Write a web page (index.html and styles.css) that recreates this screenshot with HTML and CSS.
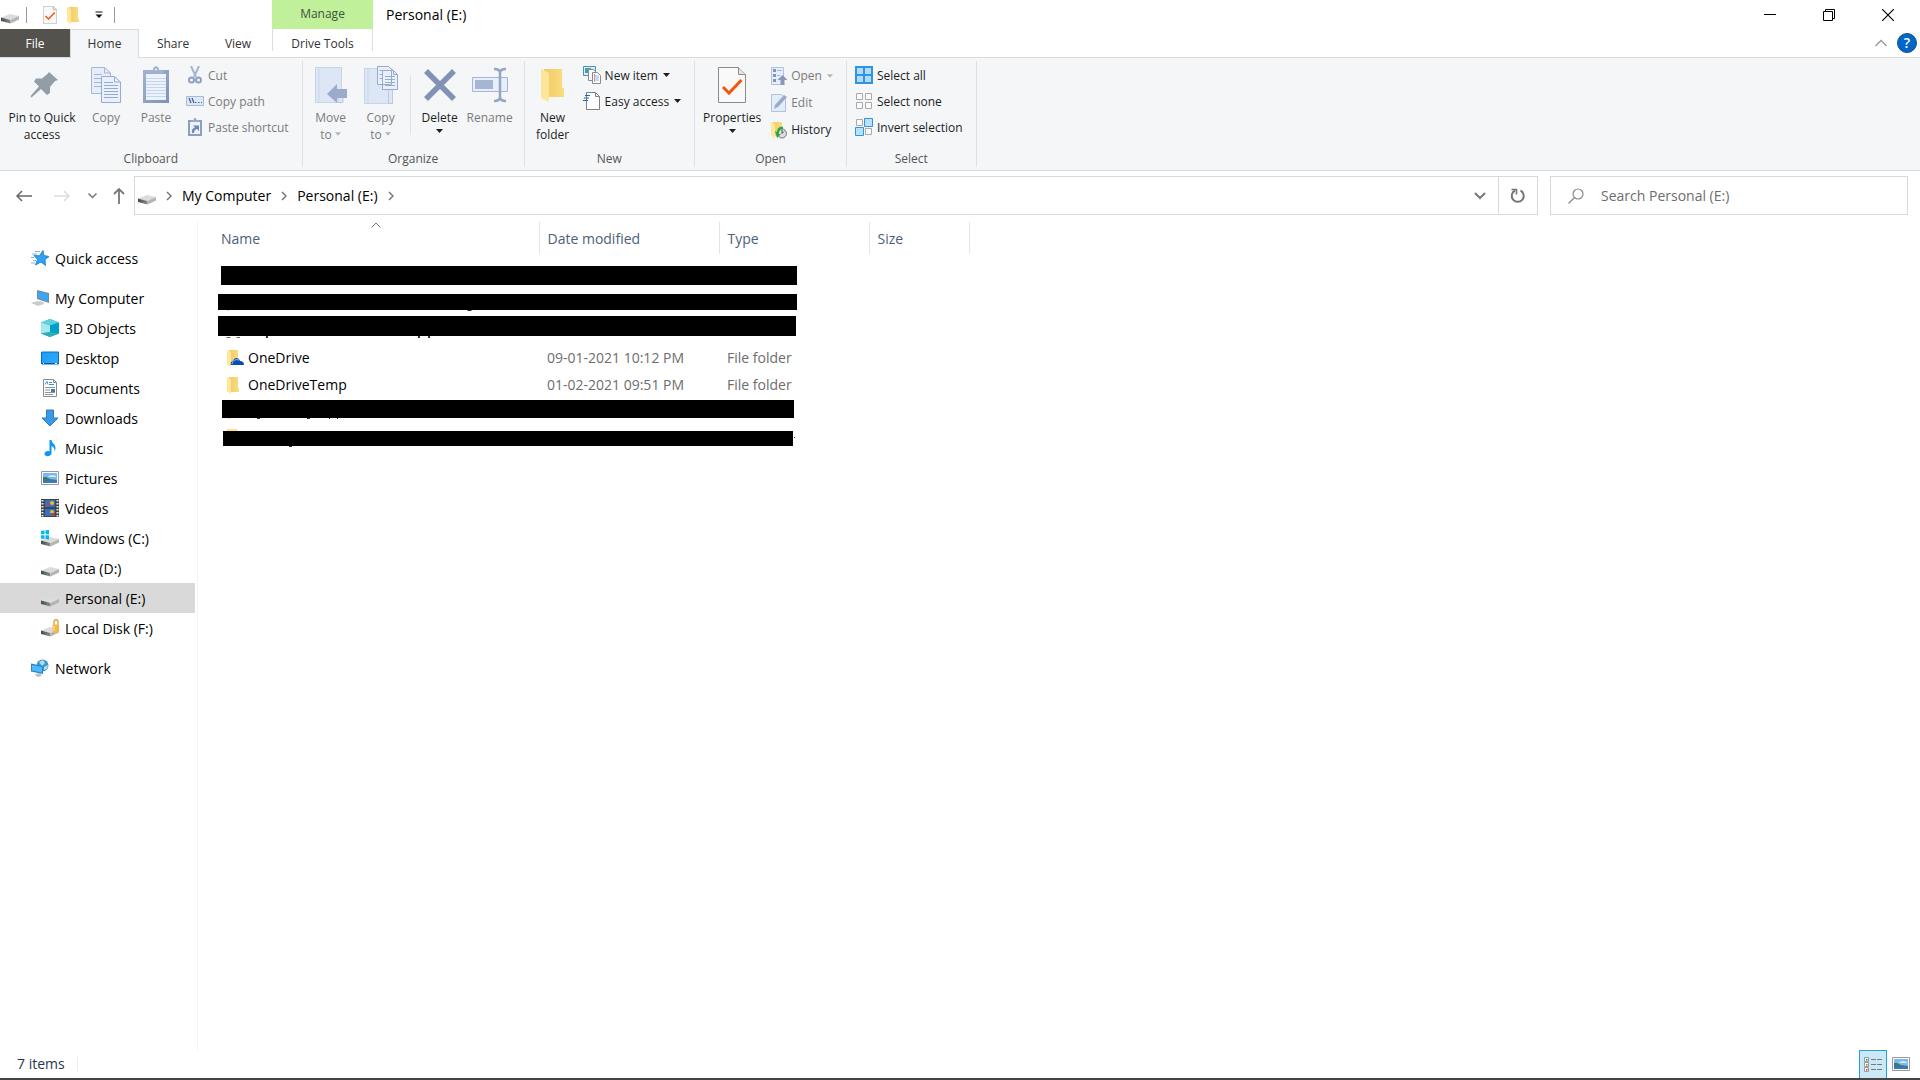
FILE: index.html
```html
<!DOCTYPE html>
<html lang="en">
<head>
  <meta charset="UTF-8">
  <meta name="viewport" content="width=device-width, initial-scale=1.0">
  <title>Personal (E:)</title>
  <link rel="stylesheet" href="styles.css">
</head>
<body>
  <!-- Shared icons -->
  <svg class="defs" width="0" height="0" aria-hidden="true">
    <linearGradient id="g-folder" x1="0" x2="1"><stop offset="0" stop-color="#efcb6b"/><stop offset="1" stop-color="#fbdc7c"/></linearGradient>
    <linearGradient id="g-clip" x1="0" x2="1" y2="1"><stop offset="0" stop-color="#a3b3d1"/><stop offset="1" stop-color="#7f91b5"/></linearGradient>
    <linearGradient id="g-blue" x1="0" x2="1" y2="1"><stop offset="0" stop-color="#1a9cf5"/><stop offset="1" stop-color="#31abff"/></linearGradient>
    <linearGradient id="g-side" x1="0" x2="1"><stop offset="0" stop-color="#4a4a4a"/><stop offset="1" stop-color="#8a8a8a"/></linearGradient>
    <symbol id="i-drive" viewBox="0 0 18 18">
      <path d="M0 11.500 9 8l9 2-8.500 4z" fill="#dcdcdc"/>
      <path d="M0 11.500 9.500 14v3.500L0 15z" fill="url(#g-side)"/>
      <path d="M9.500 14l8.500-4v3.500l-8.500 4z" fill="#b4b4b4"/>
      <path d="M5.500 14.300l1.500.4v1.300l-1.500-.4z" fill="#2fb457"/>
    </symbol>
    <symbol id="i-folder" viewBox="0 0 18 18">
      <path d="M3 1h9v11l1 1v3H3z" fill="url(#g-folder)"/>
      <path d="M1 1l4 2v15l-4-2.500z" fill="#ffe69b"/>
    </symbol>
    <symbol id="i-check" viewBox="0 0 28 36">
      <path d="M.5.500h20l7 7v28H.5z" fill="#f9f9f9" stroke="#8c8c8c"/>
      <path d="M20.500.500v7h7" fill="#e4e4e4" stroke="#8c8c8c"/>
      <path d="M5 20l6 6L23.500 13" fill="none" stroke="#f1580f" stroke-width="3"/>
    </symbol>
    <symbol id="i-pages" viewBox="0 0 30 36">
      <path d="M.5.500h13l6 5.500v20.500H.5z" fill="#e6eefa" stroke="#a5b5d3"/>
      <path d="M13.500.500v5.500h6M3 7.500h8M3 11.500h8M3 15.500h8M3 19.500h8" fill="none" stroke="#a5b5d3"/>
      <path d="M10.500 9.500h13l6 5.500v20.500h-19z" fill="#e9f0fb" stroke="#99abcd"/>
      <path d="M23.500 9.500v5.500h6M13 15.500h9M13 18.500h14M13 21.500h14M13 24.500h14M13 27.500h14M13 30.500h14" fill="none" stroke="#99abcd"/>
    </symbol>
    <symbol id="i-picture" viewBox="0 0 18 14">
      <path d="M.5.500h17v13H.5z" fill="#fff" stroke="#999"/>
      <path d="M2 2h14v10H2z" fill="#7ab8ef"/>
      <path d="M2 6h3l4 2 7 1v3H2z" fill="#3e7a78"/>
      <path d="M2 10l14-1v3H2z" fill="#3c78bf"/>
      <path d="M7 5l4-1 4 1v1H8z" fill="#d9eefc"/>
    </symbol>
    <symbol id="i-caret" viewBox="0 0 7 4"><path d="M0 0h7L3.500 4z" fill="currentColor"/></symbol>
    <symbol id="i-crumb" viewBox="0 0 6 10"><path d="M1 1l4 4-4 4" fill="none" stroke="#777" stroke-width="1.500"/></symbol>
  </svg>

  <div class="window">
    <!-- Title bar and tabs -->
    <header class="top">
      <div class="quick-bar">
        <svg class="icon" width="18" height="18"><use href="#i-drive"/></svg>
        <span class="bar-sep"></span>
        <button class="quick-button" aria-label="Properties"><svg width="14" height="18"><use href="#i-check"/></svg></button>
        <button class="quick-button" aria-label="New folder"><svg width="18" height="18"><use href="#i-folder"/></svg></button>
        <button class="quick-button quick-more" aria-label="Customize toolbar"><svg width="8" height="8" viewBox="0 0 8 8"><path d="M.5 1h7" stroke="#111"/><path d="M.5 3.500h7L4 7z" fill="#111"/></svg></button>
        <span class="bar-sep"></span>
      </div>
      <nav class="tabs">
        <a class="tab tab-file" href="#">File</a>
        <a class="tab tab-home" href="#">Home</a>
        <a class="tab tab-share" href="#">Share</a>
        <a class="tab tab-view" href="#">View</a>
      </nav>
      <div class="manage">
        <div class="manage-title">Manage</div>
        <a class="tab manage-tab" href="#">Drive Tools</a>
      </div>
      <div class="window-title">Personal (E:)</div>
      <div class="window-buttons">
        <button class="win-button" aria-label="Minimize"><svg width="12" height="12" viewBox="0 0 12 12"><path d="M0 5.500h12" stroke="#000"/></svg></button>
        <button class="win-button" aria-label="Restore"><svg width="12" height="12" viewBox="0 0 12 12"><path d="M.5 2.500h9v9h-9zM2.500 2.500v-2h9v9h-2" fill="none" stroke="#000"/></svg></button>
        <button class="win-button" aria-label="Close"><svg width="12" height="12" viewBox="0 0 12 12"><path d="M0 0l12 12M12 0L0 12" stroke="#000" stroke-width="1.200"/></svg></button>
      </div>
      <div class="help-buttons">
        <button class="plain" aria-label="Minimize the ribbon"><svg width="12" height="8" viewBox="0 0 12 8"><path d="M.5 7L6 1.500 11.500 7" fill="none" stroke="#999" stroke-width="1.300"/></svg></button>
        <button class="help" aria-label="Help">?</button>
      </div>
    </header>

    <!-- Ribbon -->
    <section class="ribbon">
      <div class="group">
        <div class="group-body">
          <button class="big big-wide">
            <svg width="36" height="36" viewBox="0 0 36 36"><path d="M25 5l9 8-3 1-5 6v6l-3 2-6-6-9 8-1.500.500.500-2 8-9-5-5 2-3h6l6-5z" fill="#929da5"/></svg>
            <span>Pin to Quick<br>access</span>
          </button>
          <button class="big" disabled>
            <svg width="30" height="36"><use href="#i-pages"/></svg>
            <span>Copy</span>
          </button>
          <button class="big" disabled>
            <svg width="28" height="38" viewBox="0 0 28 38"><path d="M1 4h26v33H1z" fill="url(#g-clip)"/><path d="M4 8h20v26H4z" fill="#edf3fc"/><path d="M4 12.500h20M4 15.500h20M4 18.500h20M4 21.500h20M4 24.500h20M4 27.500h20M4 30.500h20" stroke="#c6d5ee"/><path d="M6 4h5c0-5 6-5 6 0h5v3l-2 1H8L6 7z" fill="#a1b0ce"/><circle cx="14" cy="3.500" r="1" fill="#edf3fc"/></svg>
            <span>Paste</span>
          </button>
          <div class="small-list">
            <button class="small" disabled>
              <svg width="18" height="18" viewBox="0 0 18 18"><path d="M5 0l5 11M13 0L8 11" stroke="#a5b4d0" stroke-width="2"/><circle cx="5.500" cy="14" r="2.500" fill="none" stroke="#8fa1c2" stroke-width="2"/><circle cx="12.500" cy="14" r="2.500" fill="none" stroke="#8fa1c2" stroke-width="2"/></svg>
              Cut
            </button>
            <button class="small" disabled>
              <svg width="18" height="18" viewBox="0 0 18 18"><path d="M.5 4.500h17v9H.5z" fill="#dde8f7" stroke="#a9bad4"/><path d="M3 6l2 5M6 6l2 5" stroke="#4c6390" stroke-width="1.300"/><path d="M9 10.500h1.500M12 10.500h1.500M15 10.500h1" stroke="#4c6390"/></svg>
              Copy path
            </button>
            <button class="small" disabled>
              <svg width="18" height="18" viewBox="0 0 18 18"><path d="M2 2h14v16H2z" fill="#8c9dbf"/><path d="M4 4h10v12H4z" fill="#edf3fc"/><path d="M5 2h2.500c0-3 3-3 3 0H13v2H5z" fill="#9aabca"/><path d="M6 15c-.5-3 .5-5 3-5.500L7 7.500h6v5.500l-2-2c-2 .5-3 2-3 4z" fill="#7186b0"/></svg>
              Paste shortcut
            </button>
          </div>
        </div>
        <div class="group-name">Clipboard</div>
      </div>

      <div class="group">
        <div class="group-body body-tight">
          <button class="big" disabled>
            <svg width="32" height="36" viewBox="0 0 32 36"><path d="M.5.500h26v35H.5z" fill="#dce6f5" stroke="#c6d3e9"/><path d="M4 1v34" stroke="#cbd8ec"/><path d="M23 30c0-3 5-3 5 0v5.500h-5z" fill="#dce6f5" stroke="#bac9e2"/><path d="M12 27l10-10v5h10v9H22v5z" fill="#9cabc9"/></svg>
            <span>Move<br>to <svg class="caret" width="6" height="4"><use href="#i-caret"/></svg></span>
          </button>
          <button class="big" disabled>
            <svg width="34" height="38" viewBox="0 0 34 38"><path d="M.5 2.500h28v35H.5z" fill="#dce6f5" stroke="#c6d3e9"/><path d="M4 3v34" stroke="#cbd8ec"/><path d="M24.500 25c0-2 4-2 4 0v12.500h-4z" fill="#dce6f5" stroke="#bac9e2"/><path d="M13.500.500h11l3 3v15h-14zM18.500 4.500h11l4 4v15h-15z" fill="#e9f0fb" stroke="#99abcd"/><path d="M29.500 4.500v4h4M21 10.500h10M21 13.500h10M21 16.500h10M21 19.500h10M15.500 4.500h3M15.500 8.500h3M15.500 12.500h3" fill="none" stroke="#99abcd"/></svg>
            <span>Copy<br>to <svg class="caret" width="6" height="4"><use href="#i-caret"/></svg></span>
          </button>
          <span class="inner-sep"></span>
          <button class="big">
            <svg width="32" height="36" viewBox="0 0 32 36"><path d="M2 4l28 28M30 4L2 32" stroke="#8292b4" stroke-width="5.500"/></svg>
            <span>Delete<br><svg class="caret caret-under" width="7" height="4"><use href="#i-caret"/></svg></span>
          </button>
          <button class="big" disabled>
            <svg width="36" height="36" viewBox="0 0 36 36"><path d="M.5 10.500h35v14H.5z" fill="#e6effb" stroke="#a5b5d3"/><path d="M3 13h18v9H3z" fill="#a6b5d1"/><path d="M22 2c4 0 6 1 6 4v24c0 3-2 4-6 4M34 2c-4 0-6 1-6 4v24c0 3 2 4 6 4" fill="none" stroke="#94a5c6" stroke-width="2.500"/></svg>
            <span>Rename</span>
          </button>
        </div>
        <div class="group-name">Organize</div>
      </div>

      <div class="group">
        <div class="group-body">
          <button class="big">
            <svg width="26" height="36" viewBox="0 0 26 36"><path d="M4 2h18v18l2 2v8H4z" fill="url(#g-folder)"/><path d="M1 2l8 4v29l-8-4z" fill="#ffe59a"/></svg>
            <span>New<br>folder</span>
          </button>
          <div class="small-list">
            <button class="small">
              <svg width="18" height="18" viewBox="0 0 18 18"><path d="M.5.500h12v9H.5z" fill="#d6effb" stroke="#4a93b5"/><path d="M2 2h6v5H2z" fill="#4e9ea0"/><path d="M5.500 3.500h5l3 3v8h-8z" fill="#fbfbfb" stroke="#8a8a8a"/><path d="M9.500 6.500h5l3 3v8h-8z" fill="#fff" stroke="#8a8a8a"/><path d="M12 10h4M12 12h4M12 14h4" stroke="#8ab8e8"/><path d="M11.500 8v8" stroke="#ee9090"/></svg>
              New item <svg class="caret caret-side" width="7" height="4"><use href="#i-caret"/></svg>
            </button>
            <button class="small">
              <svg width="18" height="18" viewBox="0 0 18 18"><path d="M3.500 8V.5h9l4 4v13h-13V9" fill="#fff" stroke="#808080"/><path d="M12.500.500v4h4" fill="none" stroke="#808080"/><path d="M2 3.500h5M1 6h5M0 8.500h5" stroke="#1b6cb8" stroke-width="1.200"/></svg>
              Easy access <svg class="caret caret-side" width="7" height="4"><use href="#i-caret"/></svg>
            </button>
          </div>
        </div>
        <div class="group-name">New</div>
      </div>

      <div class="group">
        <div class="group-body">
          <button class="big big-props">
            <svg width="28" height="36"><use href="#i-check"/></svg>
            <span>Properties<br><svg class="caret caret-under" width="7" height="4"><use href="#i-caret"/></svg></span>
          </button>
          <div class="small-list list-loose">
            <button class="small" disabled>
              <svg width="16" height="18" viewBox="0 0 16 18"><path d="M.5.500h12v17H.5z" fill="#e6eefa" stroke="#b3c1da"/><path d="M2 2h3v3H2zM2 7h3v3H2zM2 12h3v3H2z" fill="#8093b8"/><path d="M6 3.500h5M6 8.500h3" stroke="#a5b5d3"/><path d="M11.500 8l5 5h-3v5h-4v-5h-3z" fill="#8798bb"/></svg>
              Open <svg class="caret caret-side" width="6" height="4"><use href="#i-caret"/></svg>
            </button>
            <button class="small" disabled>
              <svg width="16" height="18" viewBox="0 0 16 18"><path d="M.5.500h10l4 4v13H.5z" fill="#e3edf9" stroke="#b3c1da"/><path d="M3 15l1-4L13 1l3 2-9 10z" fill="#9aabca"/></svg>
              Edit
            </button>
            <button class="small">
              <svg width="16" height="18" viewBox="0 0 16 18"><path d="M2 1h9v14H2z" fill="url(#g-folder)"/><path d="M0 1l4 2v14l-4-2z" fill="#ffe69b"/><circle cx="11" cy="12.500" r="4.500" fill="#ddd" stroke="#777"/><path d="M11 12.500l2-2M11 9v3.500" stroke="#555"/><path d="M12 6c-4-1-6 2-6 5l-2-1 2 7 4-4H8c0-3 1-5 4-5z" fill="#28a745"/></svg>
              History
            </button>
          </div>
        </div>
        <div class="group-name">Open</div>
      </div>

      <div class="group">
        <div class="group-body">
          <div class="small-list">
            <button class="small">
              <svg width="18" height="18" viewBox="0 0 18 18"><path d="M1 1h16v16H1z" fill="#aedcfa" stroke="#3393df" stroke-width="2"/><path d="M9 1v16M1 9h16" stroke="#3393df" stroke-width="2"/></svg>
              Select all
            </button>
            <button class="small">
              <svg width="18" height="18" viewBox="0 0 18 18"><path d="M1.500 1.500h6v6h-6zM10.500 1.500h6v6h-6zM1.500 10.500h6v6h-6zM10.500 10.500h6v6h-6z" fill="#fafafa" stroke="#aaa"/></svg>
              Select none
            </button>
            <button class="small">
              <svg width="18" height="18" viewBox="0 0 18 18"><path d="M1.500 1.500h6v6h-6zM10.500 10.500h6v6h-6z" fill="#fafafa" stroke="#aaa"/><path d="M9.500.500h8v8h-8zM.5 9.500h8v8h-8z" fill="#b9e1fb" stroke="#3393df"/></svg>
              Invert selection
            </button>
          </div>
        </div>
        <div class="group-name">Select</div>
      </div>
    </section>

    <!-- Address row -->
    <div class="address-row">
      <div class="history-buttons">
        <button class="plain" aria-label="Back"><svg width="16" height="12" viewBox="0 0 16 12"><path d="M6 1L1 6l5 5M1 6h15" fill="none" stroke="#666" stroke-width="1.500"/></svg></button>
        <button class="plain" aria-label="Forward"><svg width="16" height="12" viewBox="0 0 16 12"><path d="M10 1l5 5-5 5M0 6h15" fill="none" stroke="#ddd" stroke-width="1.500"/></svg></button>
        <button class="plain recent" aria-label="Recent locations"><svg width="9" height="6" viewBox="0 0 9 6"><path d="M.5.500l4 4 4-4" fill="none" stroke="#777" stroke-width="1.500"/></svg></button>
        <button class="plain" aria-label="Up"><svg width="12" height="16" viewBox="0 0 12 16"><path d="M1 6l5-5 5 5M6 1v15" fill="none" stroke="#777" stroke-width="1.800"/></svg></button>
      </div>
      <div class="address">
        <svg class="icon" width="18" height="18"><use href="#i-drive"/></svg>
        <svg width="6" height="10"><use href="#i-crumb"/></svg>
        <a href="#">My Computer</a>
        <svg width="6" height="10"><use href="#i-crumb"/></svg>
        <a href="#">Personal (E:)</a>
        <svg width="6" height="10"><use href="#i-crumb"/></svg>
        <button class="plain address-drop" aria-label="Previous locations"><svg width="12" height="8" viewBox="0 0 12 8"><path d="M1 1l5 5 5-5" fill="none" stroke="#777" stroke-width="2"/></svg></button>
        <button class="plain refresh" aria-label="Refresh"><svg width="16" height="16" viewBox="0 0 16 16"><path d="M10.500 2.500A6 6 0 1 1 5 2.500" fill="none" stroke="#777" stroke-width="2"/><path d="M1.500 1.500h5v5" fill="none" stroke="#777" stroke-width="1.600"/></svg></button>
      </div>
      <label class="search">
        <svg width="16" height="16" viewBox="0 0 16 16"><circle cx="10" cy="6" r="5" fill="none" stroke="#888" stroke-width="1.200"/><path d="M6.500 9.500L.5 15.500" stroke="#888" stroke-width="1.200"/></svg>
        <input type="text" placeholder="Search Personal (E:)" aria-label="Search Personal (E:)">
      </label>
    </div>

    <div class="content">
      <!-- Navigation pane -->
      <nav class="sidebar">
        <a class="place place-top" href="#"><svg width="18" height="18" viewBox="0 0 18 18"><path d="M12 1.500l.8 5L18 7.500l-4 3 .5 6-4.500-3.500-5.500 3 2-5.500L3 6.500l5.500.3z" fill="#2ea3f2" stroke="#1576c5" stroke-width=".8"/><path d="M4 2.500h5M1 5h5M0 8.500h3M2 11.500h3M0 14h4" stroke="#75b9ef"/></svg>Quick access</a>
        <a class="place place-top place-gap" href="#"><svg width="18" height="18" viewBox="0 0 18 18"><path d="M6 1l12 3v10L6 10z" fill="#7c8994"/><path d="M7 2.500L17 5v7.500L7 9z" fill="#36a8f5"/><path d="M9 12l5 2-3 1-4-2zM0 14l6-2 7 3-6 2z" fill="#c8ccd0"/></svg>My Computer</a>
        <a class="place" href="#"><svg width="18" height="18" viewBox="0 0 18 18"><path d="M0 3.500L9 0l9 3.500v11L9 18l-9-3.500z" fill="#16a4b8"/><path d="M0 3.500L9 0l9 3.500L9 6.500z" fill="#5ed2dc"/><path d="M0 3.500L9 6.500V13l-9 1.500z" fill="#a4e9ed"/><path d="M18 3.500L9 6.500V13l9 1.500z" fill="#00a0c9"/><path d="M0 14.500L9 13l9 1.500L9 18z" fill="#2cb0b5"/></svg>3D Objects</a>
        <a class="place" href="#"><svg width="18" height="18" viewBox="0 0 18 18"><path d="M.5 3h17v12H.5z" fill="url(#g-blue)" stroke="#0870bd"/><path d="M1 14.500h16" stroke="#075a99"/><path d="M2 14.500h1M14 14.500h2" stroke="#fff"/></svg>Desktop</a>
        <a class="place" href="#"><svg width="18" height="18" viewBox="0 0 18 18"><path d="M2.500.500h10l3 3v14h-13z" fill="#fff" stroke="#8a8a8a"/><path d="M12.500.500v3h3" fill="none" stroke="#8a8a8a"/><path d="M4 5.500l2-3 1 3M8 3.500h3M8 5.500h5" fill="none" stroke="#3d92d6"/><path d="M4 8.500h10M4 11h5M4 13.500h10M4 15.500h8" stroke="#8d9398"/><path d="M10 10h4v3h-4z" fill="#3d7ea8"/></svg>Documents</a>
        <a class="place" href="#"><svg width="18" height="18" viewBox="0 0 18 18"><path d="M5.500 1h7v8h4.500L9 17 1 9h4.500z" fill="#3999e8" stroke="#2c7cc4"/></svg>Downloads</a>
        <a class="place" href="#"><svg width="18" height="18" viewBox="0 0 18 18"><path d="M8.500 1h2c0 3 4 4 4 8 0 1-.5 3-1 3.500.5-3-1-4.500-3-5.500v7c0 4-7 4-7 1 0-2.500 3-3.500 5-2.500z" fill="#0a98f0"/></svg>Music</a>
        <a class="place" href="#"><svg width="18" height="14"><use href="#i-picture"/></svg>Pictures</a>
        <a class="place" href="#"><svg width="18" height="18" viewBox="0 0 18 18"><path d="M0 0h18v18H0z" fill="#444"/><path d="M1.500 1v17M16.500 1v17" stroke="#e8e8e8" stroke-width="2" stroke-dasharray="1.500 1.500"/><path d="M4 1h10v7H4zM4 10h10v7H4z" fill="#2f72cb"/><circle cx="11" cy="4" r="2" fill="#e6bf2b"/><circle cx="7" cy="5" r="1.500" fill="#d33"/><circle cx="11" cy="13" r="2" fill="#e6bf2b"/><path d="M10 14h4v2h-4z" fill="#c33"/></svg>Videos</a>
        <a class="place" href="#"><svg width="18" height="18" viewBox="0 0 18 18"><use href="#i-drive"/><path d="M0 2l3.500-.5v3.800H0zM4.500 1.300L8 1v4.300H4.500zM0 6.200h3.500V10L0 9.500zM4.500 6.200H8v4.300L4.500 10z" fill="#00b7f0"/></svg>Windows (C:)</a>
        <a class="place" href="#"><svg width="18" height="18"><use href="#i-drive"/></svg>Data (D:)</a>
        <a class="place place-active" href="#"><svg width="18" height="18"><use href="#i-drive"/></svg>Personal (E:)</a>
        <a class="place" href="#"><svg width="18" height="18" viewBox="0 0 18 18"><use href="#i-drive"/><path d="M13 6V3c0-3 4-3 4 0v3" fill="none" stroke="#dda23a" stroke-width="1.300"/><path d="M11.500 5.500h6.500v7l-3.500 2-3-2z" fill="#f1b94c"/><path d="M13 7v5" stroke="#ffe0a0"/></svg>Local Disk (F:)</a>
        <a class="place place-top place-gap" href="#"><svg width="18" height="18" viewBox="0 0 18 18"><circle cx="11.500" cy="6.500" r="6" fill="#3f97c9"/><path d="M8 3l4-2 2 3-3 3zM13 8l4-2-1 4-3 1z" fill="#b8dcea"/><path d="M0 4.500L12 7v8L0 12.500z" fill="#2584c4"/><path d="M1 6l10 2v5.500L1 11.500z" fill="#4db9fb"/><path d="M4 15l5-1 2 3-5 1z" fill="#b9bfc4"/></svg>Network</a>
      </nav>

      <!-- File list -->
      <main class="files">
        <table class="file-table">
          <thead>
            <tr>
              <th class="col-name">Name<svg class="sort" width="10" height="6" viewBox="0 0 10 6"><path d="M.5 5.500L5 1l4.500 4.500" fill="none" stroke="#777"/></svg></th>
              <th class="col-date">Date modified</th>
              <th class="col-type">Type</th>
              <th class="col-size">Size</th>
              <th></th>
            </tr>
          </thead>
          <tbody>
            <tr class="spacer"><td colspan="5"></td></tr>
            <tr><td colspan="5"></td></tr>
            <tr><td colspan="5"></td></tr>
            <tr><td colspan="5"></td></tr>
            <tr>
              <td><a href="#"><svg width="18" height="18" viewBox="0 0 18 18"><use href="#i-folder"/><path d="M5 16c-1-3 1-4 2-4 1-4 6-4 7 0 3 0 4 2 4 4z" fill="#0c4db2"/><path d="M6 15c1-4 4-5 7-4" fill="none" stroke="#bcd6fa" stroke-width=".8"/></svg>OneDrive</a></td>
              <td>09-01-2021 10:12 PM</td>
              <td>File folder</td>
              <td></td>
              <td></td>
            </tr>
            <tr>
              <td><a href="#"><svg width="18" height="18"><use href="#i-folder"/></svg>OneDriveTemp</a></td>
              <td>01-02-2021 09:51 PM</td>
              <td>File folder</td>
              <td></td>
              <td></td>
            </tr>
            <tr><td colspan="5"></td></tr>
            <tr><td colspan="5"></td></tr>
          </tbody>
        </table>
        <!-- Bars over the hidden rows -->
        <svg class="masks" width="600" height="190" viewBox="0 0 600 190" aria-hidden="true">
          <path d="M9 44h2v1H9zM10 152h2v1h-2zM9 163h10v2H9z" fill="#ffdf8b"/>
          <path d="M8 71h5l-1 1H9zM18 71h4v1h-3z" fill="#786858"/>
          <path d="M249 44h5l-1 1h-3zM48 70h2v2h-2zM200 70h2v2h-2zM210 70h2v2h-2zM39 152h3v1h-3zM89 152h3v1h-3zM111 152h1v1h-1zM119 152h1v1h-1zM71 180h3v1h-3zM576 171h1v1h-1z" fill="#333"/>
          <path d="M3 0h576v19H3zM0 28h579v16H0zM0 50h578v20H0zM4 134h572v18H4zM5 165h570v15H5z"/>
        </svg>
      </main>
    </div>

    <!-- Status bar -->
    <footer class="status">
      <span class="count">7 items</span>
      <button class="view-button view-active" aria-label="Details view"><svg width="18" height="16" viewBox="0 0 18 16"><path d="M.5.500h4v4h-4zM.5 5.500h4v4h-4zM.5 10.500h4v4h-4z" fill="#fff" stroke="#999"/><path d="M2 2h1.500v1.500H2z" fill="#2476b5"/><path d="M2 7h1.500v1.500H2z" fill="#7d8d18"/><path d="M2 12h1.500v1.500H2z" fill="#d42c20"/><path d="M7 2.500h5M13 2.500h5M7 7.500h5M13 7.500h5M7 12.500h5M13 12.500h5" stroke="#777"/></svg></button>
      <button class="view-button" aria-label="Large icons view"><svg width="18" height="14"><use href="#i-picture"/></svg></button>
    </footer>
  </div>
</body>
</html>
```
FILE: styles.css
```css
* {
  box-sizing: border-box;
}

body {
  margin: 0;
  font-family: "Open Sans", "Noto Sans", sans-serif;
  font-size: 14px;
  color: #000;
  background-color: #fff;
}

a {
  color: inherit;
  text-decoration: none;
}

svg {
  flex: none;
  display: block;
}

button, input {
  font: inherit;
  color: inherit;
  background: none;
  border: none;
  padding: 0;
  margin: 0;
}

.defs {
  position: absolute;
}

.window {
  display: flex;
  flex-direction: column;
  min-height: 100vh;
  border-bottom: 2px solid #444;
}

/* title bar and tabs */
.top {
  display: grid;
  grid-template-columns: 272px 101px 1fr auto;
  grid-template-rows: 29px 28px;
}

.quick-bar {
  display: flex;
  align-items: center;
  gap: 7px;
  padding-left: 1px;
}

.bar-sep {
  width: 1px;
  height: 16px;
  margin-right: 7px;
  background-color: #999;
}

.quick-button {
  display: flex;
  justify-content: center;
  width: 18px;
}

.quick-more {
  width: 16px;
}

.tabs {
  grid-row: 2;
  grid-column: 1;
  display: flex;
}

.tab {
  display: flex;
  align-items: center;
  justify-content: center;
  font-size: 12px;
  color: #333;
}

.tab-file {
  width: 70px;
  background-color: #54524d;
  color: #fff;
}

.tab-home {
  position: relative;
  width: 69px;
  background-color: #f4f6f8;
  border: 1px solid #d9dbdc;
  border-bottom: none;
  margin-bottom: -1px;
  padding-bottom: 2px;
}

.tab-share {
  width: 68px;
}

.tab-view {
  width: 62px;
}

.manage {
  grid-row: 1 / 3;
  grid-column: 2;
  display: grid;
  grid-template-rows: 29px 28px;
}

.manage-title {
  display: flex;
  align-items: center;
  justify-content: center;
  background-color: #c1f09b;
  font-size: 12px;
  color: #40523a;
  padding-bottom: 2px;
}

.manage-tab {
  border: solid #ddd;
  border-width: 0 1px;
  margin-bottom: 6px;
  padding-top: 6px;
}

.window-title {
  grid-column: 3;
  padding-left: 13px;
  line-height: 29px;
}

.window-buttons {
  grid-column: 4;
  display: flex;
  align-items: center;
  gap: 47px;
  padding-right: 26px;
}

.win-button {
  display: flex;
}

.help-buttons {
  grid-row: 2;
  grid-column: 4;
  display: flex;
  align-items: center;
  justify-content: flex-end;
  gap: 10px;
  padding-right: 3px;
}

.help {
  width: 20px;
  height: 20px;
  border: 1px solid #174e82;
  border-radius: 10px;
  background-color: #0067c9;
  color: #fff;
  line-height: 18px;
  font-weight: 600;
}

.plain {
  display: flex;
  align-items: center;
  justify-content: center;
}

/* ribbon */
.ribbon {
  display: flex;
  padding: 3px 0;
  background-color: #f4f6f8;
  border: solid #d9dbdc;
  border-width: 1px 0;
  font-size: 12px;
  color: #1e1e1e;
}

.group {
  display: flex;
  flex-direction: column;
  border-right: 1px solid #dfe1e3;
}

.group-body {
  display: flex;
  flex: 1;
  padding: 0 13px 8px 3px;
}

.body-tight {
  padding-right: 9px;
}

.group-name {
  text-align: center;
  line-height: 16px;
  color: #555;
}

.big {
  display: flex;
  flex-direction: column;
  align-items: center;
  gap: 5px;
  width: 50px;
  padding-top: 5px;
  line-height: 17px;
}

.big > svg {
  height: 38px;
}

.big-wide {
  width: 78px;
}

.big-props {
  width: 68px;
}

.caret {
  display: inline-block;
  vertical-align: 3px;
}

.caret-under {
  vertical-align: 6px;
}

.caret-side {
  margin-left: 1px;
}

.inner-sep {
  width: 1px;
  margin: 14px 4px 8px;
  background-color: #dfe1e3;
}

button:disabled {
  color: #7b7b7b;
}

button:disabled .caret {
  color: #b5b5b5;
}

.small-list {
  display: flex;
  flex-direction: column;
  padding: 1px 0 0 5px;
}

.small {
  display: flex;
  align-items: center;
  gap: 4px;
  height: 26px;
}

.list-loose .small {
  height: 27px;
}

/* address row */
.address-row {
  display: flex;
  gap: 12px;
  padding: 5px 12px 7px 16px;
}

.history-buttons {
  display: flex;
  align-items: center;
  gap: 22px;
}

.recent {
  margin: 0 -6px 0 -4px;
}

.address {
  display: flex;
  flex: 1;
  align-items: center;
  gap: 10px;
  height: 39px;
  margin-left: -3px;
  padding-left: 3px;
  border: 1px solid #d9d9d9;
}

.address-drop {
  margin-left: auto;
  padding-right: 2px;
}

.refresh {
  width: 39px;
  height: 37px;
  border-left: 1px solid #d9d9d9;
}

.search {
  display: flex;
  align-items: center;
  gap: 17px;
  width: 358px;
  padding: 0 17px;
  border: 1px solid #d9d9d9;
}

.search input {
  flex: 1;
  min-width: 0;
  outline: none;
}

.search input::placeholder {
  color: #6d6d6d;
  opacity: 1;
}

/* navigation pane */
.content {
  display: flex;
  flex: 1;
}

.sidebar {
  width: 198px;
  padding: 21px 2px 0 0;
  border-right: 1px solid #f3f3f3;
}

.place {
  display: flex;
  align-items: center;
  gap: 6px;
  height: 30px;
  padding-left: 41px;
}

.place-top {
  padding-left: 31px;
}

.place-gap {
  margin-top: 10px;
}

.place-active {
  background-color: #d9d9d9;
}

/* file list */
.files {
  position: relative;
  flex: 1;
  padding-left: 15px;
}

.file-table {
  width: 100%;
  table-layout: fixed;
  border-collapse: collapse;
}

.file-table th {
  position: relative;
  height: 32px;
  padding: 0 0 0 8px;
  border-right: 1px solid #e5e5e5;
  font-weight: normal;
  text-align: left;
  color: #4c607a;
}

.file-table th:last-child {
  border-right: none;
}

.col-name {
  width: 326px;
}

.col-date {
  width: 180px;
}

.col-type {
  width: 150px;
}

.col-size {
  width: 100px;
}

.sort {
  position: absolute;
  top: 0;
  left: 158px;
}

.file-table td {
  height: 27px;
  padding: 0 0 0 8px;
  color: #6d6d6d;
}

.file-table .spacer td {
  height: 9px;
}

.file-table td a {
  display: flex;
  align-items: center;
  gap: 4px;
  padding-left: 5px;
  color: #000;
}

.masks {
  position: absolute;
  top: 44px;
  left: 20px;
}

/* status bar */
.status {
  display: flex;
  align-items: center;
  height: 28px;
  padding: 0 5px 0 17px;
  color: #26364f;
}

.count {
  margin-right: auto;
  padding-right: 12px;
  border-right: 1px solid #eee;
  line-height: 14px;
}

.view-button {
  display: flex;
  align-items: center;
  justify-content: center;
  width: 28px;
  height: 28px;
}

.view-active {
  background-color: #cbe8f6;
  border: 1px solid #26a0da;
  border-bottom: none;
}
```
